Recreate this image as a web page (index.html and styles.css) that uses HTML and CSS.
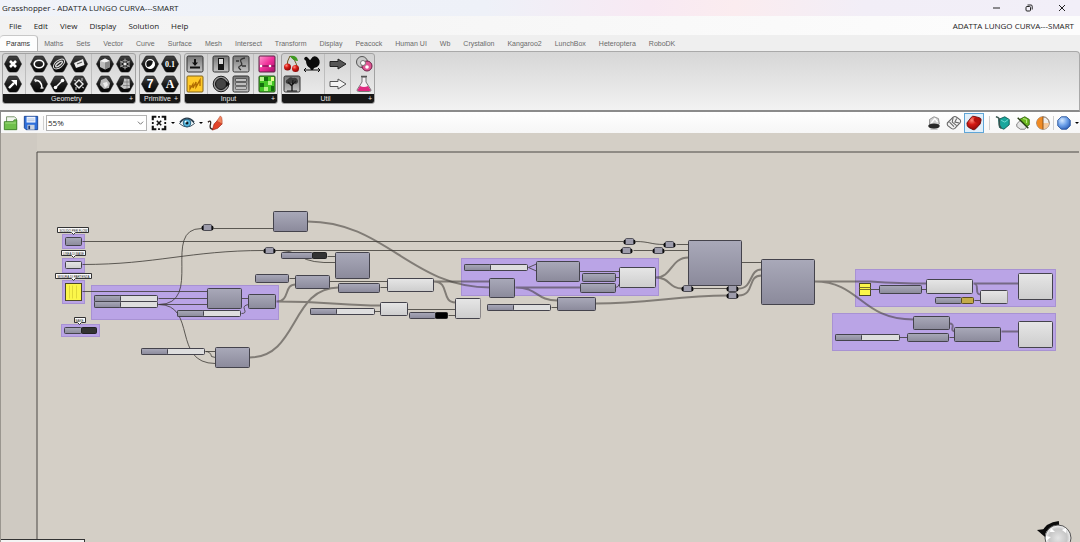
FILE: index.html
```html
<!DOCTYPE html>
<html lang="en">
<head>
<meta charset="utf-8">
<title>Grasshopper - ADATTA LUNGO CURVA---SMART</title>
<link rel="stylesheet" href="styles.css">
</head>
<body>
<svg class="defs" aria-hidden="true">
  <defs>
    <linearGradient id="gHex" x1="0" y1="0" x2="0" y2="1"><stop offset="0" stop-color="#444"/><stop offset=".5" stop-color="#1c1c1c"/><stop offset="1" stop-color="#050505"/></linearGradient>
    <linearGradient id="gSteel" x1="0" y1="0" x2="0" y2="1"><stop offset="0" stop-color="#777"/><stop offset="1" stop-color="#c4c4c4"/></linearGradient>
    <linearGradient id="gNode" x1="0" y1="0" x2="0" y2="1"><stop offset="0" stop-color="#a9a9b9"/><stop offset="1" stop-color="#8b8a9b"/></linearGradient>
    <linearGradient id="gLight" x1="0" y1="0" x2="0" y2="1"><stop offset="0" stop-color="#e6e6e6"/><stop offset="1" stop-color="#cdcdcd"/></linearGradient>
    <linearGradient id="gPink" x1="0" y1="0" x2="1" y2="1"><stop offset="0" stop-color="#ff9ad0"/><stop offset=".5" stop-color="#f0309a"/><stop offset="1" stop-color="#a8106a"/></linearGradient>
    <radialGradient id="gRed" cx=".35" cy=".3" r=".8"><stop offset="0" stop-color="#ff8a7a"/><stop offset=".4" stop-color="#d61a14"/><stop offset="1" stop-color="#7a0505"/></radialGradient>
    <radialGradient id="gBlue" cx=".35" cy=".3" r=".8"><stop offset="0" stop-color="#d4e8ff"/><stop offset=".5" stop-color="#6fa2ea"/><stop offset="1" stop-color="#2a5cb4"/></radialGradient>
    <radialGradient id="gDial" cx=".5" cy=".5" r=".5"><stop offset="0" stop-color="#e4e4e4"/><stop offset=".7" stop-color="#c6c6c6"/><stop offset="1" stop-color="#f8f8f8"/></radialGradient>
    <path id="hex" d="M1.500 10 5 3.400Q5.600 2 7 2h6q1.400 0 2 1.400L18.500 10 15 16.600Q14.400 18 13 18H7q-1.400 0-2-1.400z" fill="url(#gHex)" stroke="#111" stroke-width=".6"/>
    <rect id="tile" x="2" y="2" width="16" height="16" rx="1.500" fill="url(#gSteel)" stroke="#333"/>
    <g id="relay"><rect x="-6" y="-2" width="12" height="5" rx="2" fill="#0c0c0c"/><rect x="-4" y="-3" width="8" height="6" rx="1" fill="#9d9cab" stroke="#3b3b44" stroke-width=".8"/></g>
  </defs>
</svg>

<div class="window">
  <header class="titlebar">
    <h1 class="title">Grasshopper - ADATTA LUNGO CURVA---SMART</h1>
    <div class="window-controls">
      <button type="button" aria-label="Minimize"><svg viewBox="0 0 8 8"><path d="M1 4h7"/></svg></button>
      <button type="button" aria-label="Restore"><svg viewBox="0 0 8 8"><rect x="1" y="2.500" width="4.500" height="4.500" rx="1"/><path d="M2.500 1h3.500q1.200 0 1.200 1.200V5.500"/></svg></button>
      <button type="button" aria-label="Close"><svg viewBox="0 0 8 8"><path d="m1 1 6 6M7 1 1 7"/></svg></button>
    </div>
  </header>

  <nav class="menubar" aria-label="Main menu">
    <button type="button">File</button><button type="button">Edit</button><button type="button">View</button><button type="button">Display</button><button type="button">Solution</button><button type="button">Help</button>
    <span class="document-name">ADATTA LUNGO CURVA---SMART</span>
  </nav>

  <div class="tabs" role="tablist">
    <button type="button" role="tab" aria-selected="true" class="tab active">Params</button>
    <button type="button" role="tab" class="tab">Maths</button>
    <button type="button" role="tab" class="tab">Sets</button>
    <button type="button" role="tab" class="tab">Vector</button>
    <button type="button" role="tab" class="tab">Curve</button>
    <button type="button" role="tab" class="tab">Surface</button>
    <button type="button" role="tab" class="tab">Mesh</button>
    <button type="button" role="tab" class="tab">Intersect</button>
    <button type="button" role="tab" class="tab">Transform</button>
    <button type="button" role="tab" class="tab">Display</button>
    <button type="button" role="tab" class="tab">Peacock</button>
    <button type="button" role="tab" class="tab">Human UI</button>
    <button type="button" role="tab" class="tab">Wb</button>
    <button type="button" role="tab" class="tab">Crystallon</button>
    <button type="button" role="tab" class="tab">Kangaroo2</button>
    <button type="button" role="tab" class="tab">LunchBox</button>
    <button type="button" role="tab" class="tab">Heteroptera</button>
    <button type="button" role="tab" class="tab">RoboDK</button>
  </div>

  <section class="ribbon" aria-label="Params components">
    <div class="group">
      <div class="icons">
        <div class="block">
          <button type="button" aria-label="Geometry"><svg viewBox="0 0 20 20"><use href="#hex"/><path d="m7 7 6 6M13 7l-6 6" stroke="#fff" stroke-width="2.600"/></svg></button>
          <button type="button" aria-label="Vector"><svg viewBox="0 0 20 20"><use href="#hex"/><path d="m6 14 5-5" stroke="#fff" stroke-width="2.400"/><path d="M8 6h6v6z" fill="#fff"/></svg></button>
        </div>
        <div class="block">
          <button type="button" aria-label="Circle"><svg viewBox="0 0 20 20"><use href="#hex"/><ellipse cx="10" cy="10" rx="4.800" ry="3.800" fill="none" stroke="#fff" stroke-width="1.600"/></svg></button>
          <button type="button" aria-label="Arc"><svg viewBox="0 0 20 20"><use href="#hex"/><path d="M5.500 6.500q7-1 7.500 7.500" fill="none" stroke="#fff" stroke-width="1.600"/><path d="m6 5 1 3m4.500 6h3" stroke="#ddd" stroke-width="1.400"/></svg></button>
          <button type="button" aria-label="Curve"><svg viewBox="0 0 20 20"><use href="#hex"/><g transform="rotate(-38 10 10)" fill="none" stroke="#ddd"><ellipse cx="10" cy="10" rx="6.500" ry="3.600"/><ellipse cx="10" cy="10" rx="4" ry="1.400" stroke-width="1.400"/></g></svg></button>
          <button type="button" aria-label="Line"><svg viewBox="0 0 20 20"><use href="#hex"/><path d="m6.500 13.500 7-7" stroke="#fff" stroke-width="1.500"/><circle cx="13.500" cy="6.500" r="1.800" fill="#fff"/><circle cx="6.500" cy="13.500" r="1.800" fill="#fff"/></svg></button>
          <button type="button" aria-label="Plane"><svg viewBox="0 0 20 20"><use href="#hex"/><path d="m5 9 9-4 1.500 6L7 14z" fill="#eee"/><path d="m8 10 5-2" stroke="#555" stroke-width="1.200"/></svg></button>
          <button type="button" aria-label="Rectangle"><svg viewBox="0 0 20 20"><use href="#hex"/><path d="m10 6 4 4-4 4-4-4z" fill="none" stroke="#eee" stroke-width="1.400"/><path d="m5 6 2 1M13 4v3M7 13v3M13 13l2 1" stroke="#ccc"/></svg></button>
        </div>
        <div class="block">
          <button type="button" aria-label="Box"><svg viewBox="0 0 20 20"><use href="#hex"/><path d="m5 7 5-2.500L15 7v6l-5 2.500L5 13z" fill="#bbb"/><path d="m5 7 5 1.500L15 7l-5-2.500z" fill="#f2f2f2"/><path d="M10 8.500V15.500L15 13V7z" fill="#888"/></svg></button>
          <button type="button" aria-label="Brep"><svg viewBox="0 0 20 20"><use href="#hex"/><path d="m6 6 5-2 4 5-1 5-5 1-4-4z" fill="#b9b9b9"/><path d="m8 9 4-1 1 3-3 3z" fill="#eee"/></svg></button>
          <button type="button" aria-label="Mesh"><svg viewBox="0 0 20 20"><use href="#hex"/><path d="M10 4.500v11M5 7l10 6M15 7 5 13M10 6l4 2v4l-4 2-4-2V8z" fill="none" stroke="#bbb" stroke-width=".8"/><circle cx="10" cy="10" r="1.300" fill="#eee"/></svg></button>
          <button type="button" aria-label="Surface"><svg viewBox="0 0 20 20"><use href="#hex"/><path d="m9 4.500 5.500.5.500 9-6 1-4-3q4-1 4-7.500z" fill="#c4c4c4"/><path d="M9 8h5.500M8 11.500h7M12 5v10" stroke="#666" stroke-width=".6"/></svg></button>
        </div>
      </div>
      <div class="caption"><span>Geometry</span><button type="button" aria-label="Expand Geometry">+</button></div>
    </div>

    <div class="group">
      <div class="icons">
        <div class="block">
          <button type="button" aria-label="Boolean"><svg viewBox="0 0 20 20"><use href="#hex"/><circle cx="10" cy="10" r="4.300" fill="#111" stroke="#fff" stroke-width="1.200"/><path d="M13 7a4.300 4.300 0 1 1-6 6q5 0 6-6z" fill="#fff"/></svg></button>
          <button type="button" aria-label="Integer"><svg viewBox="0 0 20 20"><use href="#hex"/><text x="10" y="14" class="glyph sans">7</text></svg></button>
          <button type="button" aria-label="Number"><svg viewBox="0 0 20 20"><use href="#hex"/><text x="10" y="13" class="glyph small">0.1</text></svg></button>
          <button type="button" aria-label="Text"><svg viewBox="0 0 20 20"><use href="#hex"/><text x="10" y="14" class="glyph">A</text></svg></button>
        </div>
      </div>
      <div class="caption"><span>Primitive</span><button type="button" aria-label="Expand Primitive">+</button></div>
    </div>

    <div class="group">
      <div class="icons">
        <div class="block">
          <button type="button" aria-label="Button"><svg viewBox="0 0 20 20"><use href="#tile"/><path d="M10 5v5" stroke="#111" stroke-width="2"/><path d="M7 8.500h6L10 12zM5 12.500h10v2H5z" fill="#111"/></svg></button>
          <button type="button" aria-label="Panel"><svg viewBox="0 0 20 20"><rect x="2" y="2" width="16" height="16" rx="1" fill="#ffc928" stroke="#80621a"/><path d="M5 11v4l3-5v4l3-6v5l4-7v6" fill="none" stroke="#b06a00" stroke-width="1.300"/></svg></button>
        </div>
        <div class="block">
          <button type="button" aria-label="Boolean Toggle"><svg viewBox="0 0 20 20"><use href="#tile"/><rect x="7" y="4" width="6" height="12" fill="#151515"/><rect x="8" y="5" width="4" height="5" fill="#ddd"/></svg></button>
          <button type="button" aria-label="Control Knob"><svg viewBox="0 0 20 20"><circle cx="10" cy="10" r="7.800" fill="#999" stroke="#222"/><circle cx="10" cy="10" r="5.500" fill="#444" stroke="#111"/><path d="m15 7 4 3-4 3z" fill="#111"/></svg></button>
          <button type="button" aria-label="Digit Scroller"><svg viewBox="0 0 20 20"><use href="#tile"/><path d="M14 4q-6 1-4 4t-1 4 1 4M5 7h3M11 12h4" fill="none" stroke="#333" stroke-width="1.300"/></svg></button>
          <button type="button" aria-label="Value List"><svg viewBox="0 0 20 20"><use href="#tile"/><path d="M4.500 6h11M4.500 10h11M4.500 14h11" stroke="#333" stroke-width="3"/><path d="M5 6h10M5 10h10M5 14h10" stroke="#eee" stroke-width="1.600"/></svg></button>
        </div>
        <div class="block">
          <button type="button" aria-label="Gradient"><svg viewBox="0 0 20 20"><rect x="2" y="2" width="16" height="16" rx="1" fill="url(#gPink)" stroke="#5a2244"/><path d="M2 12h16" stroke="#5b0b3c"/><circle cx="4" cy="12" r="1.300" fill="#fff"/><circle cx="13" cy="12" r="1.300" fill="#fff"/></svg></button>
          <button type="button" aria-label="Image Sampler"><svg viewBox="0 0 20 20"><rect x="2" y="2" width="16" height="16" rx="1" fill="#43c625" stroke="#244d18"/><path d="M3 3h4v4H3zM11 7h4v4h-4zM7 13h4v4H7z" fill="#b6f58a"/><path d="M7 3h4v4H7zM3 9h4v4H3zM14 12h3v5h-3z" fill="#14700d"/><path d="M14 3h3v4h-3z" fill="#e4ff8c"/></svg></button>
        </div>
      </div>
      <div class="caption"><span>Input</span><button type="button" aria-label="Expand Input">+</button></div>
    </div>

    <div class="group">
      <div class="icons">
        <div class="block">
          <button type="button" aria-label="Cherry Picker"><svg viewBox="0 0 20 20"><path d="M8 2q-3 5-3 10M8 2q6 4 7 11" fill="none" stroke="#6a5a20"/><path d="M8 2q7-1 8 5-5 0-8-5z" fill="#3f9a22"/><circle cx="5.500" cy="13" r="3.500" fill="url(#gRed)"/><circle cx="13.500" cy="14.500" r="3.500" fill="url(#gRed)"/></svg></button>
          <button type="button" aria-label="Data Tree"><svg viewBox="0 0 20 20"><use href="#tile"/><path d="M10 17v-6M10 12 6 8M10 11l4-4M10 12l1-6" stroke="#111" stroke-width="1.300"/><path d="M4 9q-1-3 2-4 2-3 5-1 4-1 5 3 0 3-3 3-1-2-3-1-3 2-6 0z" fill="#222" fill-opacity=".75"/><path d="M5 17h10" stroke="#111"/></svg></button>
          <button type="button" aria-label="Fitness Landscape"><svg viewBox="0 0 20 20"><path d="M2 5q1-3 3-2l2 2q1 2 2 0 2-4 6-2 4 3 2 8-2 3-5 3l-1 2H9l-1-2Q4 12 4 7z" fill="#0a0a0a"/><path d="M2 16h16M4 14l-2 2 2 2M16 14l2 2-2 2" stroke="#0a0a0a" fill="none"/></svg></button>
        </div>
        <div class="block">
          <button type="button" aria-label="Data Input"><svg viewBox="0 0 20 20"><path d="M2 7.500h8V5l8 5-8 5v-2.500H2z" fill="#555" stroke="#222"/></svg></button>
          <button type="button" aria-label="Data Output"><svg viewBox="0 0 20 20"><path d="M2 7.500h8V5l8 5-8 5v-2.500H2z" fill="#f4f4f4" stroke="#555"/></svg></button>
        </div>
        <div class="block">
          <button type="button" aria-label="Cluster"><svg viewBox="0 0 20 20"><circle cx="8" cy="8" r="5.500" fill="#c9c9c9" stroke="#555"/><circle cx="13" cy="12" r="5" fill="#df5593" stroke="#6d2145"/><circle cx="9" cy="9" r="2.500" fill="#fff" stroke="#777"/><circle cx="13" cy="13" r="1.800" fill="#fff"/></svg></button>
          <button type="button" aria-label="Galapagos"><svg viewBox="0 0 20 20"><path d="M8 3v5l-5 8q0 1.500 1.500 1.500h11q1.500 0 1.500-1.500l-5-8V3z" fill="#f5eff3" stroke="#777"/><path d="m6 12-2.500 4q0 1 1 1h11q1 0 1-1L14 12q-4 2-8 0z" fill="#df2a80"/><path d="M7 2.500h6" stroke="#555" stroke-width="1.400"/></svg></button>
        </div>
      </div>
      <div class="caption"><span>Util</span><button type="button" aria-label="Expand Util">+</button></div>
    </div>
  </section>

  <div class="toolbar" role="toolbar">
    <button type="button" class="tool" aria-label="Open"><svg viewBox="0 0 18 18"><path d="M4 2h9l2 2v12H4z" fill="#f1f6ee" stroke="#6c8a60"/><path d="M1.500 7.500h10l1-2h3v11h-14z" fill="#6fc04b" stroke="#3d7f28"/><path d="M2.500 9h12" stroke="#a9e08c"/></svg></button>
    <button type="button" class="tool" aria-label="Save"><svg viewBox="0 0 18 18"><path d="M1.500 1.500h15v15h-13l-2-2z" fill="#2d6edb" stroke="#153e8b"/><rect x="4" y="2" width="10" height="6.500" fill="#eef4ff"/><path d="M5 4.500h8M5 6.500h8" stroke="#a9bcdd"/><rect x="5" y="11" width="8" height="5.500" fill="#c9d2df"/><rect x="6" y="12" width="2" height="4" fill="#1d3a73"/></svg></button>
    <span class="divider"></span>
    <label class="zoom"><select aria-label="Zoom level"><option>55%</option></select><svg viewBox="0 0 8 8"><path d="m1 3 3 3 3-3" fill="none" stroke="#666"/></svg></label>
    <button type="button" class="tool" aria-label="Zoom extents"><svg viewBox="0 0 18 18"><path d="M2 6V2h4M12 2h4v4M16 12v4h-4M6 16H2v-4" fill="none" stroke="#111" stroke-width="2.400"/><path d="M8 2h2M8 16h2M2 8v2M16 8v2" stroke="#111" stroke-width="2"/><path d="m6.500 6.500 5 5M11.500 6.500l-5 5" stroke="#111" stroke-width="1.700"/></svg></button>
    <button type="button" class="more" aria-label="Zoom options"><svg viewBox="0 0 4 4"><path d="M0 1h4L2 3z"/></svg></button>
    <button type="button" class="tool" aria-label="Named views"><svg viewBox="0 0 18 18"><path d="M.5 9.500Q9-.500 17.500 9.500 9 17.500.5 9.500z" fill="#eef8fc" stroke="#283c4c"/><path d="M1 8Q9-1 17 8" fill="none" stroke="#273949" stroke-width="1.400"/><circle cx="9" cy="9" r="4.300" fill="#5bbbe2" stroke="#1c5778"/><circle cx="9" cy="9" r="1.700" fill="#0b1820"/><circle cx="7.500" cy="7.500" r="1" fill="#fff"/></svg></button>
    <button type="button" class="more" aria-label="View options"><svg viewBox="0 0 4 4"><path d="M0 1h4L2 3z"/></svg></button>
    <button type="button" class="tool" aria-label="Sketch"><svg viewBox="0 0 18 18"><path d="M1 8q4-3 3 2-2 6 3 6" fill="none" stroke="#33251f" stroke-width="1.500"/><path d="M6 17 8 10l4-4 5 4-5 5z" fill="#e44329" stroke="#8f1b10" stroke-width=".7"/><path d="m11 7 4-6q2 1 2 5v4z" fill="#f0845f" stroke="#b63d20" stroke-width=".6"/></svg></button>

    <div class="preview-tools">
      <button type="button" class="tool" aria-label="No preview"><svg viewBox="0 0 18 18"><path d="m4 5 5-3 5 2 1 6-6 4-5-3z" fill="#d2d2d2" stroke="#888"/><path d="m6 9 4-5 3 4" fill="none" stroke="#fff" stroke-width="1.500"/><ellipse cx="9" cy="12.500" rx="6.500" ry="3" fill="#282828"/><path d="M5 16h8" stroke="#aaa"/></svg></button>
      <button type="button" class="tool" aria-label="Wireframe preview"><svg viewBox="0 0 18 18"><g fill="#f2f2f2" stroke="#666" stroke-width="1.200"><path d="M1.500 9 8 2.500q2-1.500 4 0l4 3q1 1.500 0 3L10 15q-2 1.500-4 0l-4-3q-1-1.500-.5-3z"/><path d="m4 8 5 5M8 3l-1 5 5 4M12 4l-2 4 5 1" fill="none"/></g></svg></button>
      <button type="button" class="tool selected" aria-label="Shaded preview" aria-pressed="true"><svg viewBox="0 0 18 18"><path d="M1 9 6 2.500q1-1.500 3-1l6 1.500q2 .5 2 2.500L16 10l-5 5.500q-1.500 1.500-3 1L3 14Q1 13 1 9z" fill="url(#gRed)" stroke="#6e0808"/><ellipse cx="12" cy="6" rx="3.500" ry="2.500" fill="#b3120e" transform="rotate(30 12 6)"/></svg></button>
      <span class="divider"></span>
      <button type="button" class="tool" aria-label="Selected preview"><svg viewBox="0 0 18 18"><path d="m4 5 7-3 5 3v6l-6 5-5-2z" fill="#1aa79d" stroke="#0a5650"/><path d="M1 2q5 1 4 6-1 4 2 7" fill="none" stroke="#39544f" stroke-width="1.500"/><path d="m7 6 4 2 4-3" fill="none" stroke="#7be0d8"/></svg></button>
      <button type="button" class="tool" aria-label="Document preview"><svg viewBox="0 0 18 18"><path d="m2 10 5-5 7 7-3 4H6l-4-3z" fill="#e4e4e4" stroke="#777"/><path d="m5 5 6-3 5 3v6l-3 2z" fill="#6cb91f" stroke="#2f6208"/><path d="m3 3 12 12" stroke="#233c10" stroke-width="1.600"/><path d="m9 4 4 1v4" fill="none" stroke="#c6f08e"/></svg></button>
      <button type="button" class="tool" aria-label="Preview quality"><svg viewBox="0 0 18 18"><circle cx="9" cy="9" r="7" fill="#eee" stroke="#6b5440"/><path d="M9 2a7 7 0 0 0 0 14z" fill="#ef8a24"/><path d="M9 9h7a7 7 0 0 1-7 7z" fill="#f6c99b"/><path d="M9 2v14" stroke="#7c4a19"/></svg></button>
      <span class="divider"></span>
      <button type="button" class="tool" aria-label="Mesh settings"><svg viewBox="0 0 18 18"><path d="m6 2 6 0 4 4v6l-4 4H6l-4-4V6z" fill="url(#gBlue)" stroke="#24509a"/></svg></button>
      <button type="button" class="more" aria-label="Mesh options"><svg viewBox="0 0 4 4"><path d="M0 1h4L2 3z"/></svg></button>
    </div>
  </div>

  <main class="canvas">
    <svg class="graph" role="img" aria-label="Definition graph">
      <g transform="translate(0 -133)">
        <rect class="margin" x="0" y="133" width="37" height="100%"/>
        <path class="page" d="M37 2000V152H4000"/>
      </g>
      <g transform="translate(.5 -132.500)">
        <g class="area">
          <rect x="62" y="234" width="22" height="14"/><rect x="62" y="258" width="22" height="14"/><rect x="62" y="280" width="22" height="23"/><rect x="61" y="324" width="38" height="12"/>
          <rect x="91" y="285" width="187" height="34"/><rect x="461" y="258" width="197" height="37"/><rect x="855" y="269" width="200" height="37"/><rect x="832" y="313" width="223" height="37"/>
        </g>

        <g class="wires">
          <path d="M82 241H623M82 264C155 264 190 250 263 250M158 304C204 304 160 228 201 228M213 228H273"/>
          <path d="M82 291H207M158 298H207M158 304H207M158 304C197 304 171 363 215 363M205 351H215M205 351Q210 351 211 356L215 357"/>
          <path d="M241 298H248M241 313Q246 313 244 309T248 304M275 250H621M275 250Q290 249 300 256T335 262M327 256H335M289 278H295"/>
          <path d="M374 311H380M407 309H455M448 315H455M380 287H387M329 281H387"/>
          <path d="M635 241C649 241 650 244 664 244M676 244H688M633 250H652M664 250H688M693 288H727M741 262H761"/>
          <path d="M528 267L537 263M528 267L537 271M579 271H619M615 277H619M615 287Q618 287 619 283M551 307H557"/>
          <path d="M859 289H879M921 289H926M974 300H980M899 337H907M949 337H954"/>
        </g>
        <g class="wires thick">
          <path d="M307 221C385 221 410 287 490 287M249 357C298 357 290 287 338 287M276 301C290 301 283 284 295 284M276 301C330 301 340 305 380 305"/>
          <path d="M433 281H490M433 281C450 281 440 302 455 302M515 287H581M515 287C538 287 535 300 557 300"/>
          <path d="M655 277C672 277 670 257 688 257M655 277C670 277 668 288 682 288M595 303C650 303 675 295 727 295"/>
          <path d="M738 288C753 288 748 269 761 269M738 295C755 295 746 275 761 275"/>
          <path d="M814 281H870Q900 283 926 283M814 281C860 281 860 319 913 319M973 283H1018M973 283C980 283 973 294 980 294M949 323Q953 323 952 327T955 331M1001 331H1018"/>
        </g>

        <g class="node">
          <rect x="65" y="237" width="16" height="8"/><rect x="273" y="211" width="34" height="20"/><rect x="207" y="288" width="34" height="20"/><rect x="248" y="294" width="27" height="14"/><rect x="215" y="347" width="34" height="20"/>
          <rect x="335" y="252" width="34" height="26"/><rect x="255" y="274" width="33" height="8"/><rect x="295" y="275" width="34" height="13"/><rect x="338" y="283" width="41" height="9"/>
          <rect x="536" y="261" width="43" height="20"/><rect x="582" y="273" width="33" height="8"/><rect x="580" y="283" width="35" height="9"/><rect x="489" y="278" width="25" height="19"/><rect x="557" y="297" width="38" height="13"/>
          <rect x="688" y="240" width="53" height="45"/><rect x="761" y="259" width="53" height="45"/>
          <rect x="879" y="285" width="42" height="8"/><rect x="913" y="316" width="36" height="13"/><rect x="907" y="333" width="41" height="8"/><rect x="954" y="327" width="46" height="14"/>
        </g>
        <g class="node light">
          <rect x="65" y="261" width="16" height="7"/><rect x="387" y="278" width="46" height="13"/><rect x="380" y="302" width="27" height="13"/><rect x="455" y="298" width="25" height="20"/><rect x="619" y="267" width="36" height="20"/>
          <rect x="926" y="279" width="46" height="14"/><rect x="980" y="290" width="27" height="13"/><rect x="1018" y="273" width="34" height="26"/><rect x="1018" y="321" width="34" height="26"/>
        </g>
        <g class="node light slider">
          <rect x="94" y="295" width="63" height="6"/><rect x="94" y="301" width="63" height="6"/><rect x="177" y="310" width="63" height="6"/><rect x="141" y="348" width="63" height="6"/><rect x="310" y="308" width="64" height="6"/><rect x="464" y="264" width="63" height="6"/><rect x="487" y="304" width="63" height="6"/><rect x="835" y="334" width="64" height="6"/>
        </g>
        <g class="node">
          <rect x="94" y="295" width="26" height="6"/><rect x="94" y="301" width="26" height="6"/><rect x="177" y="310" width="26" height="6"/><rect x="141" y="348" width="26" height="6"/><rect x="310" y="308" width="26" height="6"/><rect x="464" y="264" width="26" height="6"/><rect x="487" y="304" width="26" height="6"/><rect x="835" y="334" width="26" height="6"/>
          <rect x="64" y="327" width="17" height="6"/><rect x="281" y="252" width="31" height="6"/><rect x="409" y="312" width="26" height="6"/><rect x="935" y="297" width="26" height="6"/>
        </g>
        <g class="node value">
          <rect x="81" y="327" width="15" height="6"/><rect x="312" y="252" width="14" height="6"/><rect class="black" x="435" y="312" width="12" height="6"/><rect class="gold" x="961" y="297" width="12" height="6"/>
        </g>
        <g class="panel">
          <rect x="65" y="283" width="16" height="17"/><path d="M69 285v13M72 285v13M76 285v13" class="rule"/>
          <rect x="859" y="283" width="11" height="12"/><path d="M859 287h11M859 289h11" class="line"/>
        </g>
        <path class="torn" d="M480 299v19M1007 291v12"/>

        <use href="#relay" x="207" y="227"/><use href="#relay" x="269" y="250"/><use href="#relay" x="629" y="241"/><use href="#relay" x="669" y="244"/><use href="#relay" x="626" y="250"/><use href="#relay" x="658" y="250"/><use href="#relay" x="687" y="288"/><use href="#relay" x="732" y="288"/><use href="#relay" x="732" y="295"/>

        <g class="tag">
          <path d="M57 227h31v5H75l-2 2-2-2H57zM61 250h24v5H75l-2 2-2-2H61zM55 273h36v5H75l-2 2-2-2H55zM74 317h11v5h-4l-2 2-2-2h-3z"/>
          <text x="73" y="231">SOLIDO PER FLOW</text><text x="73" y="254">LINEA DI BASE</text><text x="73" y="277">MISURA DI PARTENZA</text><text x="79" y="321">BAKE</text>
        </g>
      </g>
    </svg>
    <div class="status"></div>
    <svg class="compass" viewBox="0 0 44 22" aria-hidden="true">
      <path d="M7 14Q11 4 23 3" fill="none" stroke="#0b0b0b" stroke-width="4"/><path d="m1 10 8-1v8z" fill="#0b0b0b"/>
      <circle cx="22" cy="18" r="13" fill="url(#gDial)" stroke="#555"/><path d="m10 16 5 1-5 4zM15 8l4 4-5 0zM30 8l-4 2 4 3z" fill="#fff"/>
    </svg>
  </main>
</div>
</body>
</html>
```

FILE: styles.css
```css
* { box-sizing: border-box; }
body { margin: 0; font-family: "Open Sans", "Noto Sans", sans-serif; font-size: 8px; color: #1b1b1b; background: #f0f0f0; }
button { margin: 0; padding: 0; border: 0; background: none; font: inherit; color: inherit; }
svg { display: block; }
.defs { position: absolute; width: 0; height: 0; }

.window { display: flex; flex-direction: column; height: 100vh; overflow: hidden; }

.titlebar { display: flex; align-items: center; justify-content: space-between; height: 16px; flex: none; padding: 0 14px 0 2px; background: linear-gradient(90deg, #f0f3f9 0%, #eef1f8 45%, #f8e9f3 60%, #fbecef 68%, #f2eef7 80%, #f2eff8 100%); }
.title { margin: 0; font-size: 8px; font-weight: 400; line-height: 16px; white-space: nowrap; }
.window-controls { display: flex; gap: 25px; }
.window-controls svg { width: 8px; height: 8px; fill: none; stroke: #222; stroke-width: 1; }

.menubar { display: flex; align-items: center; gap: 12px; height: 19px; flex: none; padding: 0 6px 0 9px; background: linear-gradient(90deg, #f2f2f2, #fcfcfc 90%); }
.document-name { margin-left: auto; white-space: nowrap; }

.tabs { display: flex; gap: 13px; height: 16px; flex: none; padding-left: 6px; background: #efefef; font: 7px/17px "Liberation Sans", Arial, sans-serif; color: #6a6a6a; white-space: nowrap; }
.tab.active { margin: 0 -7px 0 -6px; padding: 0 7px 0 6px; border-right: 1px solid #b5b5b5; border-top: 1px solid #c8c8c8; border-radius: 4px 4px 0 0; background: #fdfdfd; color: #333; line-height: 15px; }

.ribbon { display: flex; gap: 3px; align-items: flex-start; height: 61px; flex: none; padding: 1px 2px 0; border: 1px solid #a9a9a9; border-left: 0; border-bottom: 2px solid #8b8b8b; border-radius: 0 4px 0 0; background: linear-gradient(#d6d6d6, #f2f2f2); }
.group { display: flex; flex-direction: column; border: 1px solid #a2a2a2; border-radius: 3px; background: linear-gradient(#d2d2d2, #efefef); overflow: hidden; }
.icons { display: flex; }
.block { display: grid; grid-auto-flow: column; grid-template-rows: 20px 20px; grid-auto-columns: 20px; }
.block + .block { margin-left: 2px; padding-left: 3px; border-left: 1px solid #bdbdbd; }
.block svg { width: 20px; height: 20px; }
.glyph { font: 700 12px "Liberation Serif", serif; fill: #fff; text-anchor: middle; }
.glyph.sans { font-family: "Liberation Sans", sans-serif; }
.glyph.small { font-size: 8px; }
.caption { display: flex; align-items: center; height: 9px; padding: 0 2px 0 1px; background: #171717; color: #eee; font: 7px/9px "Liberation Sans", Arial, sans-serif; }
.caption span { flex: 1; text-align: center; }

.toolbar { display: flex; align-items: center; height: 21px; flex: none; border-left: 1px solid #8b8b8b; background: linear-gradient(#fff, #f6f6f6); }
.tool { display: grid; place-items: center; width: 20px; height: 20px; }
.tool svg { width: 16px; height: 16px; }
.tool.selected { border: 1px solid #5fa6d8; background: #e0effa; }
.more { display: grid; place-items: center; width: 8px; }
.more svg { width: 4px; height: 4px; }
.divider { width: 1px; height: 14px; margin: 0 2px; background: #cfcfcf; }
.zoom { display: flex; align-items: center; width: 101px; height: 16px; margin-right: 2px; padding-right: 2px; border: 1px solid #b3b3b3; background: #fff; }
.zoom select { flex: 1; height: 14px; padding: 0 1px; border: 0; appearance: none; background: none; font: inherit; color: inherit; }
.zoom svg { width: 7px; height: 7px; }
.preview-tools { display: flex; align-items: center; margin-left: auto; }
.preview-tools .divider { margin: 0 3px 0 5px; }
.preview-tools .divider ~ .divider { margin: 0; }
.preview-tools .more { width: 6px; }

.canvas { position: relative; flex: 1; min-height: 0; overflow: hidden; border-left: 1px solid #9a968f; background: #d4cfc6; }
.graph { width: 100%; height: 100%; margin-left: -1px; }
.margin { fill: #cfcac2; }
.page { fill: none; stroke: #4a4845; }
.area rect { fill: #baa4e6; stroke: #a892d3; stroke-width: 1; }
.wires { fill: none; stroke: #3c3934; stroke-opacity: .8; stroke-width: 1; }
.wires.thick { stroke-opacity: .55; stroke-width: 2; }
.node rect { fill: url(#gNode); stroke: #44434c; rx: 1px; }
.node.light rect { fill: url(#gLight); }
.node.slider rect { fill: #dedede; }
.node.value rect { fill: #333; stroke: #222; }
.node.value .black { fill: #000; }
.node.value .gold { fill: #c4ab49; stroke: #5a4d20; }
.panel rect { fill: #fbf64a; stroke: #4c4a24; }
.rule { stroke: #e0d838; }
.line { stroke: #77722a; }
.torn { stroke: #d4cfc6; stroke-dasharray: 1 1; }
.tag path { fill: #fafafa; stroke: #333; }
.tag text { font: 3px "Liberation Sans", Arial, sans-serif; fill: #222; text-anchor: middle; }
.status { position: absolute; left: 0; bottom: 0; width: 84px; height: 3px; border: 1px solid #333; border-width: 1px 1px 0 0; background: #f4f4f4; }
.compass { position: absolute; right: 0; bottom: 0; width: 44px; height: 22px; }
```
